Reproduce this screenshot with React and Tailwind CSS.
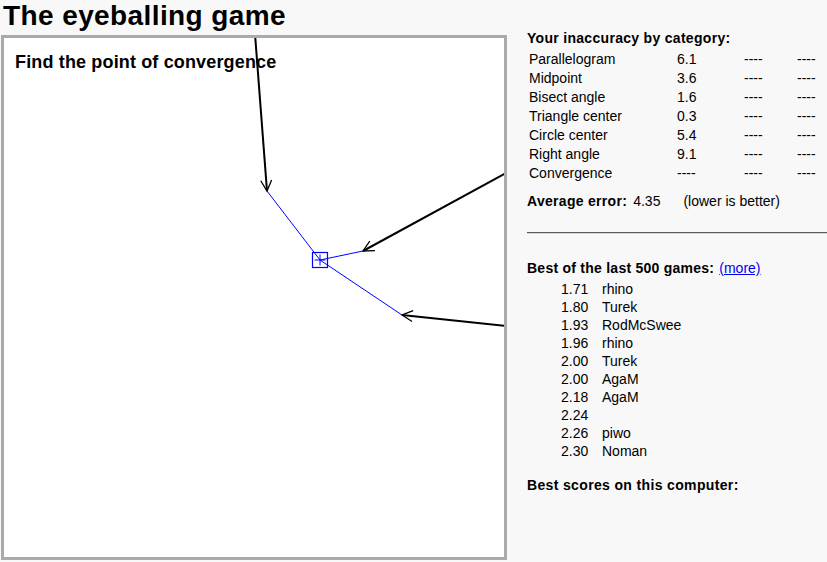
import React from "react";

const cats = [
  ["Parallelogram", "6.1"],
  ["Midpoint", "3.6"],
  ["Bisect angle", "1.6"],
  ["Triangle center", "0.3"],
  ["Circle center", "5.4"],
  ["Right angle", "9.1"],
  ["Convergence", "----"],
];

const best = [
  ["1.71", "rhino"],
  ["1.80", "Turek"],
  ["1.93", "RodMcSwee"],
  ["1.96", "rhino"],
  ["2.00", "Turek"],
  ["2.00", "AgaM"],
  ["2.18", "AgaM"],
  ["2.24", ""],
  ["2.26", "piwo"],
  ["2.30", "Noman"],
];

function Arrow({ x1, y1, x2, y2 }) {
  const dx = x2 - x1;
  const dy = y2 - y1;
  const len = Math.hypot(dx, dy);
  const ux = dx / len;
  const uy = dy / len;
  const L = 12;
  const a = (27 * Math.PI) / 180;
  const c = Math.cos(a);
  const s = Math.sin(a);
  const bx = -ux;
  const by = -uy;
  const p1 = [x2 + L * (bx * c - by * s), y2 + L * (bx * s + by * c)];
  const p2 = [x2 + L * (bx * c + by * s), y2 + L * (-bx * s + by * c)];
  return (
    <g stroke="#000" fill="none" strokeWidth="2">
      <line x1={x1} y1={y1} x2={x2} y2={y2} />
      <polyline
        strokeWidth="1.3"
        points={`${p1[0]},${p1[1]} ${x2},${y2} ${p2[0]},${p2[1]}`}
      />
    </g>
  );
}

export default function App() {
  const cx = 316;
  const cy = 222;
  const tips = [
    [263, 153],
    [359, 213],
    [398, 277],
  ];
  return (
    <div
      className="w-[827px] h-[562px] bg-[#f8f8f8] overflow-hidden flex text-black"
      style={{ fontFamily: '"Liberation Sans", Arial, sans-serif' }}
    >
      <div className="w-[527px] shrink-0">
        <h1 className="text-[28px] leading-[32px] font-bold pl-[3px] tracking-[0.4px]">
          The eyeballing game
        </h1>
        <div className="ml-[1px] mt-[3px] w-[506px] h-[525px] border-[3px] border-[#aaaaaa] bg-white relative">
          <div className="pt-[13px] pl-[11px] text-[18px] leading-[22px] font-bold tracking-[0.15px] relative z-10">
            Find the point of convergence
          </div>
          <svg
            className="absolute inset-0"
            width="500"
            height="519"
            viewBox="0 0 500 519"
          >
            <Arrow x1={251} y1={-4} x2={263} y2={153} />
            <Arrow x1={502} y1={135} x2={359} y2={213} />
            <Arrow x1={502} y1={288} x2={398} y2={277} />
            <g stroke="#0000ff" strokeWidth="1" fill="none">
              {tips.map(([x, y], i) => (
                <line key={i} x1={x} y1={y} x2={cx} y2={cy} />
              ))}
              <rect x={cx - 7.5} y={cy - 7.5} width="15" height="15" strokeWidth="1.2" />
              <line x1={cx - 5.5} y1={cy} x2={cx + 5.5} y2={cy} />
              <line x1={cx} y1={cy - 5.5} x2={cx} y2={cy + 5.5} />
            </g>
          </svg>
        </div>
      </div>
      <div className="flex-1 pt-[30px] text-[14px]">
        <div className="font-bold leading-[17px] tracking-[0.3px]">Your inaccuracy by category:</div>
        <div className="mt-[3px] pl-[2px] grid grid-cols-[148px_67px_53px_auto] leading-[19px]">
          {cats.map(([n, v]) => (
            <React.Fragment key={n}>
              <div>{n}</div>
              <div>{v}</div>
              <div>----</div>
              <div>----</div>
            </React.Fragment>
          ))}
        </div>
        <div className="mt-[10px] leading-[17px] flex">
          <span className="font-bold tracking-[0.3px]">Average error:</span>
          <span className="ml-[6px]">4.35</span>
          <span className="ml-[23px]">(lower is better)</span>
        </div>
        <div className="mt-[22px] border-t border-t-[#5a5a5a] border-b border-b-[#d8d8d8]" />
        <div className="mt-[26px] leading-[17px]">
          <span className="font-bold tracking-[0.25px]">Best of the last 500 games:</span>
          <a href="#" className="ml-[5px] text-[#0000ee] underline">
            (more)
          </a>
        </div>
        <div className="mt-[3px] pl-[34px] grid grid-cols-[41px_auto] leading-[18px]">
          {best.map(([s, n], i) => (
            <React.Fragment key={i}>
              <div>{s}</div>
              <div>{n}</div>
            </React.Fragment>
          ))}
        </div>
        <div className="mt-[17px] font-bold leading-[17px] tracking-[0.35px]">Best scores on this computer:</div>
      </div>
    </div>
  );
}
